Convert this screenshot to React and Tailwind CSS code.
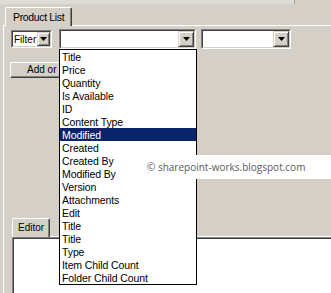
import React from 'react';

const fields = [
  'Title',
  'Price',
  'Quantity',
  'Is Available',
  'ID',
  'Content Type',
  'Modified',
  'Created',
  'Created By',
  'Modified By',
  'Version',
  'Attachments',
  'Edit',
  'Title',
  'Title',
  'Type',
  'Item Child Count',
  'Folder Child Count',
];

function Arrow() {
  return (
    <svg width="7" height="4" viewBox="0 0 7 4">
      <path d="M0 0h7L3.5 4z" fill="#000" />
    </svg>
  );
}

// classic win32 combo box: sunken field + raised arrow button
function Combo({ className = '', label, btn = 'w-[16px]' }) {
  return (
    <div className={`border border-t-[#808080] border-l-[#808080] border-b-white border-r-white ${className}`}>
      <div className="flex h-full border border-t-[#404040] border-l-[#404040] border-b-[#d4d0c8] border-r-[#d4d0c8] bg-white">
        <div className="flex-1 overflow-hidden whitespace-nowrap pl-[1px] leading-[15px]">{label}</div>
        <div className={`flex ${btn} shrink-0 items-center justify-center border border-t-[#d4d0c8] border-l-[#d4d0c8] border-b-[#404040] border-r-[#404040] bg-[#d4d0c8] shadow-[inset_1px_1px_#fff,inset_-1px_-1px_#808080]`}>
          <Arrow />
        </div>
      </div>
    </div>
  );
}

export default function App() {
  return (
    <div className="relative h-[293px] w-[331px] overflow-hidden bg-[#d4d0c8] font-['Liberation_Sans',Arial,sans-serif] text-[10px] text-black">
      {/* bottom edge of whatever sits above */}
      <div className="h-[4px] w-[295px] border-r border-[#a8a49c] bg-[#dedbd5]" />

      {/* Product List tab */}
      <div className="flex h-[21px] items-end pl-[5px]">
        <div className="relative z-10 -mb-px h-[19px] rounded-t-[2px] border-l border-t border-white border-r-[#404040] border-r bg-[#d4d0c8] px-[7px] text-[10.5px] leading-[19px] tracking-[-0.35px] shadow-[inset_-1px_0_#808080]">
          Product List
        </div>
      </div>

      <div className="ml-[3px] h-[270px] border-l border-t border-white pt-[3px]">
        <div className="flex items-start pl-[7px]">
          <Combo className="mt-[1px] h-[18px] w-[41px]" btn="w-[13px]" label="Filter" />
          <Combo className="ml-[7px] h-[20px] w-[137px]" />
          <Combo className="ml-[5px] h-[20px] w-[90px]" />
        </div>

        <div className="mt-[13px] ml-[6px] h-[16px] w-[120px] overflow-hidden whitespace-nowrap border border-t-white border-l-white border-b-[#404040] border-r-[#404040] pl-[16px] leading-[14px] shadow-[inset_-1px_-1px_#808080]">
          Add or
        </div>

        {/* Editor tab panel */}
        <div className="mt-[140px] pl-[8px]">
          <div className="flex h-[18px] items-end">
            <div className="relative z-10 -mb-px h-[19px] rounded-t-[2px] border-l border-t border-white border-r border-r-[#404040] bg-[#d4d0c8] px-[5px] leading-[18px] shadow-[inset_-1px_0_#808080]">
              Editor
            </div>
          </div>
          <div className="border-t border-white">
            <div className="h-[60px] border-l border-t border-[#808080]">
              <div className="h-full border-l border-t border-[#404040] bg-white" />
            </div>
          </div>
        </div>
      </div>

      {/* open dropdown list */}
      <div className="absolute left-[59px] top-[49px] z-20 w-[138px] border border-black bg-white">
        {fields.map((f, i) => (
          <div
            key={i}
            className={`h-[13px] pl-[2px] text-[10.5px] leading-[15px] tracking-[-0.1px] whitespace-nowrap ${
              f === 'Modified' && i === 6 ? 'bg-[#0a246a] text-white' : ''
            }`}
          >
            {f}
          </div>
        ))}
      </div>

      {/* watermark */}
      <div className="absolute left-[143px] right-0 top-[155px] z-30 h-[24px] bg-white pl-[4px] font-['Open_Sans',sans-serif] text-[10px] leading-[24px] text-[#5a5a5a]">
        © sharepoint-works.blogspot.com
      </div>
    </div>
  );
}
